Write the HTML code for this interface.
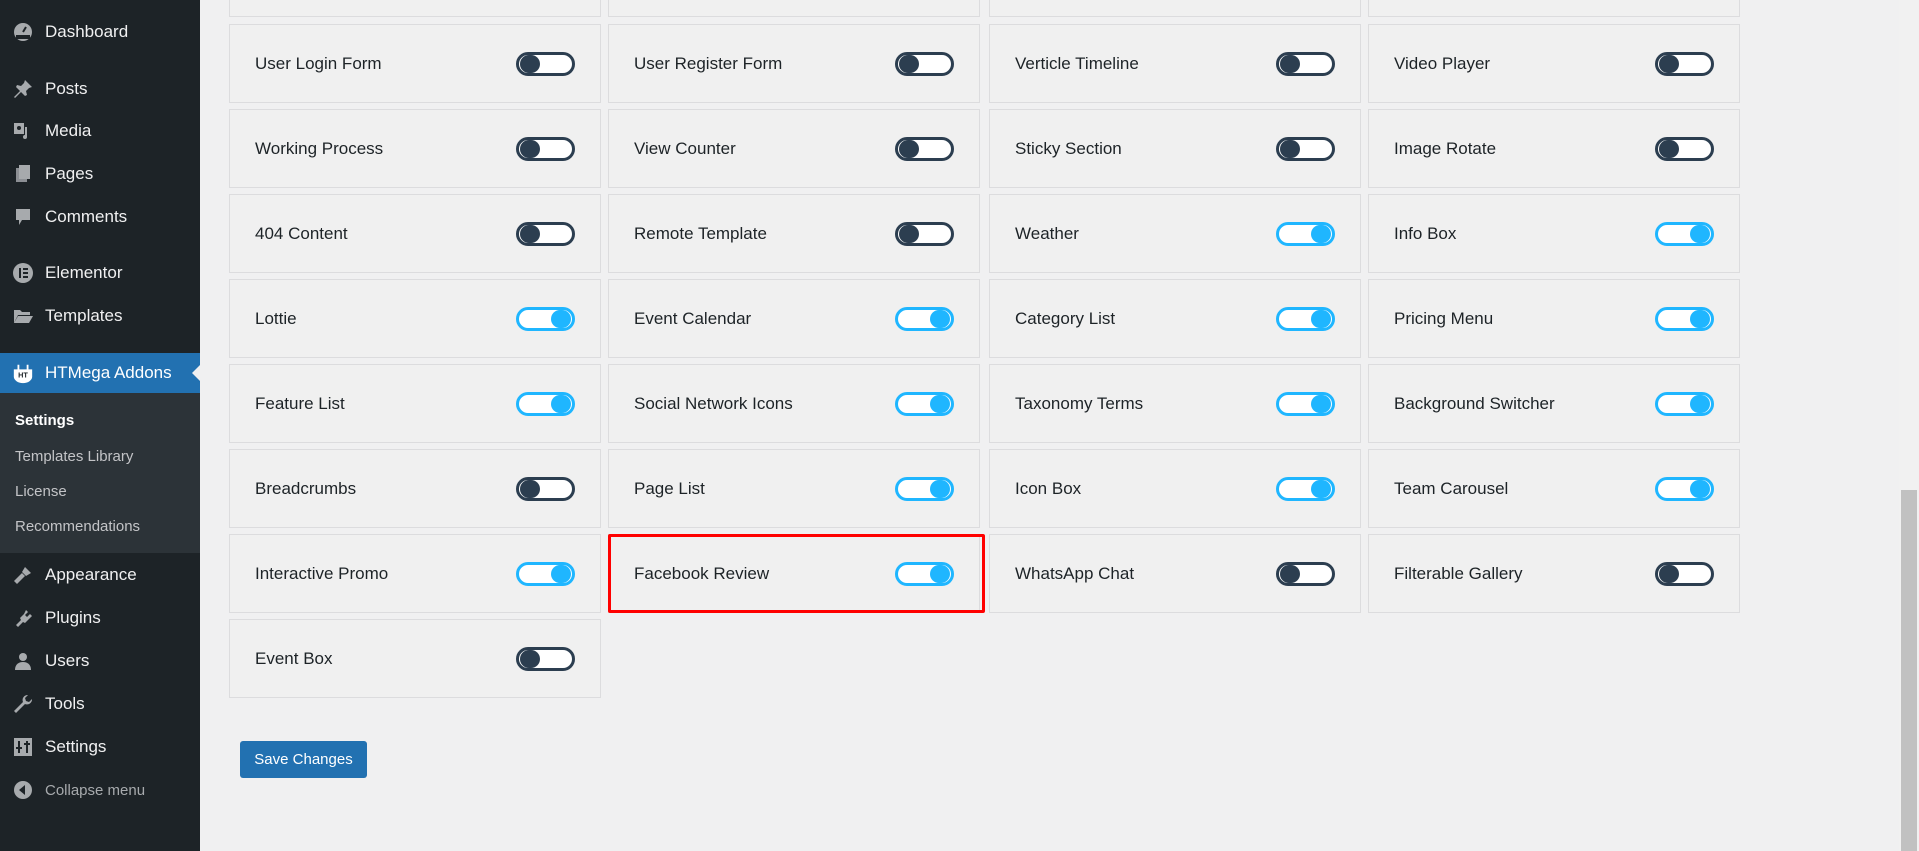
<!DOCTYPE html>
<html><head><meta charset="utf-8"><style>
*{box-sizing:border-box;margin:0;padding:0}
body{width:1919px;height:851px;overflow:hidden;background:#f0f0f1;font-family:"Liberation Sans",sans-serif;position:relative}
#side{position:absolute;left:0;top:0;width:200px;height:851px;background:#1d2327}
.mi{position:absolute;left:0;width:200px;height:36px;display:flex;align-items:center;color:#f0f0f1;font-size:17px}
.mi .ic{position:absolute;left:12px;width:22px;height:22px;display:flex;align-items:center;justify-content:center;color:#a7aaad}
.mi span.t{position:absolute;left:45px}
#sub{position:absolute;left:0;top:393px;width:200px;height:160px;background:#2c3338}
.si{position:absolute;left:15px;font-size:15px;color:#c3c4c7}
.card{position:absolute;width:372px;height:79px;background:#f0f0f0;border:1px solid #dcdcde;display:flex;align-items:center;justify-content:space-between;padding:0 25px 0 25px}
.card .l{font-size:17px;color:#1d2327}
.tg{width:59px;height:24px;border:3px solid #2c3e50;border-radius:12px;background:#fff;position:relative}
.tg::after{content:"";position:absolute;top:0;left:1px;width:20px;height:18px;border-radius:9px;background:#2c3e50}
.tg.on{border-color:#1fb6ff}
.tg.on::after{left:auto;right:1px;background:#1fb6ff}
</style></head><body>
<div id="side">
<div class="mi" style="top:14px"><div class="ic"><svg width="20" height="20" viewBox="0 0 20 20"><circle cx="10" cy="10" r="9" fill="#a7aaad"/><path d="M10 10 L13 5" stroke="#1d2327" stroke-width="2"/><rect x="3" y="13" width="14" height="4" fill="#1d2327"/></svg></div><span class="t">Dashboard</span></div>
<div class="mi" style="top:71px"><div class="ic"><svg width="20" height="20" viewBox="0 0 20 20"><path d="M12 1l7 7-3 1-3 3 1 4-2 1-4-4-6 6-1-1 6-6-4-4 1-2 4 1 3-3z" fill="#a7aaad"/></svg></div><span class="t">Posts</span></div>
<div class="mi" style="top:113px"><div class="ic"><svg width="20" height="20" viewBox="0 0 20 20"><rect x="1" y="2" width="10" height="11" fill="#a7aaad"/><circle cx="6" cy="7" r="2" fill="#1d2327"/><path d="M14 6v10a2 2 0 1 1-2-2V6z" fill="#a7aaad"/></svg></div><span class="t">Media</span></div>
<div class="mi" style="top:156px"><div class="ic"><svg width="20" height="20" viewBox="0 0 20 20"><rect x="3" y="4" width="11" height="14" fill="#8c8f94"/><rect x="6" y="1" width="11" height="14" fill="#a7aaad"/></svg></div><span class="t">Pages</span></div>
<div class="mi" style="top:199px"><div class="ic"><svg width="20" height="20" viewBox="0 0 20 20"><path d="M3 2h14v11H9l-3 5v-5H3z" fill="#a7aaad"/></svg></div><span class="t">Comments</span></div>
<div class="mi" style="top:255px"><div class="ic"><svg width="22" height="22" viewBox="0 0 22 22"><circle cx="11" cy="11" r="10" fill="#a7aaad"/><rect x="7" y="6" width="2" height="10" fill="#1d2327"/><rect x="11" y="6" width="5" height="2" fill="#1d2327"/><rect x="11" y="10" width="5" height="2" fill="#1d2327"/><rect x="11" y="14" width="5" height="2" fill="#1d2327"/></svg></div><span class="t">Elementor</span></div>
<div class="mi" style="top:298px"><div class="ic"><svg width="20" height="20" viewBox="0 0 20 20"><path d="M1 4h6l2 2h8v3H5L1 17z" fill="#a7aaad"/><path d="M5 10h15l-4 7H1z" fill="#a7aaad"/></svg></div><span class="t">Templates</span></div>
<div class="mi" style="top:353px;height:40px;background:#2271b1;color:#fff"><div class="ic"><svg width="24" height="24" viewBox="0 0 24 24"><path d="M2 8h20v8a10 7 0 0 1-20 0z" fill="#fff"/><rect x="6" y="3" width="2" height="6" fill="#fff"/><rect x="16" y="3" width="2" height="6" fill="#fff"/><text x="12" y="17" font-size="8" font-weight="bold" text-anchor="middle" fill="#1d2327" font-family="Liberation Sans">HT</text></svg></div><span class="t">HTMega Addons</span></div>
<div style="position:absolute;left:192px;top:365px;width:0;height:0;border-top:8px solid transparent;border-bottom:8px solid transparent;border-right:8px solid #f0f0f1"></div>
<div id="sub">
<div class="si" style="top:19px;color:#fff;font-weight:bold">Settings</div>
<div class="si" style="top:55px">Templates Library</div>
<div class="si" style="top:90px">License</div>
<div class="si" style="top:125px">Recommendations</div>
</div>
<div class="mi" style="top:557px"><div class="ic"><svg width="20" height="20" viewBox="0 0 20 20"><path d="M12 2l6 6-5 3-4-4z" fill="#a7aaad"/><path d="M9 8l3 3-8 8-3-3z" fill="#a7aaad"/></svg></div><span class="t">Appearance</span></div>
<div class="mi" style="top:600px"><div class="ic"><svg width="20" height="20" viewBox="0 0 20 20"><path d="M13 2l2 2-3 3 2 2 3-3 2 2-3 3-4 4-2-1-5 5-2-2 5-5-1-2 4-4z" fill="#a7aaad"/></svg></div><span class="t">Plugins</span></div>
<div class="mi" style="top:643px"><div class="ic"><svg width="20" height="20" viewBox="0 0 20 20"><circle cx="10" cy="6" r="4" fill="#a7aaad"/><path d="M2 19c0-6 4-8 8-8s8 2 8 8z" fill="#a7aaad"/></svg></div><span class="t">Users</span></div>
<div class="mi" style="top:686px"><div class="ic"><svg width="20" height="20" viewBox="0 0 20 20"><path d="M15 1a5 5 0 0 0-5 7L1 17l2 2 9-9a5 5 0 0 0 7-5l-3 3-3-1-1-3z" fill="#a7aaad"/></svg></div><span class="t">Tools</span></div>
<div class="mi" style="top:729px"><div class="ic"><svg width="20" height="20" viewBox="0 0 20 20"><rect x="1" y="1" width="18" height="18" fill="#a7aaad"/><path d="M6 4v12M14 4v12M3 11h6M11 7h6" stroke="#1d2327" stroke-width="2"/></svg></div><span class="t">Settings</span></div>
<div class="mi" style="top:772px;color:#a7aaad;font-size:15px"><div class="ic"><svg width="20" height="20" viewBox="0 0 20 20"><circle cx="10" cy="10" r="9" fill="#a7aaad"/><path d="M12 5l-6 5 6 5z" fill="#1d2327"/></svg></div><span class="t">Collapse menu</span></div>
</div>

<div class="card" style="left:229px;top:-62px"></div>
<div class="card" style="left:608px;top:-62px"></div>
<div class="card" style="left:989px;top:-62px"></div>
<div class="card" style="left:1368px;top:-62px"></div>

<div class="card" style="left:229px;top:24px"><span class="l">User Login Form</span><div class="tg"></div></div>
<div class="card" style="left:608px;top:24px"><span class="l">User Register Form</span><div class="tg"></div></div>
<div class="card" style="left:989px;top:24px"><span class="l">Verticle Timeline</span><div class="tg"></div></div>
<div class="card" style="left:1368px;top:24px"><span class="l">Video Player</span><div class="tg"></div></div>

<div class="card" style="left:229px;top:109px"><span class="l">Working Process</span><div class="tg"></div></div>
<div class="card" style="left:608px;top:109px"><span class="l">View Counter</span><div class="tg"></div></div>
<div class="card" style="left:989px;top:109px"><span class="l">Sticky Section</span><div class="tg"></div></div>
<div class="card" style="left:1368px;top:109px"><span class="l">Image Rotate</span><div class="tg"></div></div>

<div class="card" style="left:229px;top:194px"><span class="l">404 Content</span><div class="tg"></div></div>
<div class="card" style="left:608px;top:194px"><span class="l">Remote Template</span><div class="tg"></div></div>
<div class="card" style="left:989px;top:194px"><span class="l">Weather</span><div class="tg on"></div></div>
<div class="card" style="left:1368px;top:194px"><span class="l">Info Box</span><div class="tg on"></div></div>

<div class="card" style="left:229px;top:279px"><span class="l">Lottie</span><div class="tg on"></div></div>
<div class="card" style="left:608px;top:279px"><span class="l">Event Calendar</span><div class="tg on"></div></div>
<div class="card" style="left:989px;top:279px"><span class="l">Category List</span><div class="tg on"></div></div>
<div class="card" style="left:1368px;top:279px"><span class="l">Pricing Menu</span><div class="tg on"></div></div>

<div class="card" style="left:229px;top:364px"><span class="l">Feature List</span><div class="tg on"></div></div>
<div class="card" style="left:608px;top:364px"><span class="l">Social Network Icons</span><div class="tg on"></div></div>
<div class="card" style="left:989px;top:364px"><span class="l">Taxonomy Terms</span><div class="tg on"></div></div>
<div class="card" style="left:1368px;top:364px"><span class="l">Background Switcher</span><div class="tg on"></div></div>

<div class="card" style="left:229px;top:449px"><span class="l">Breadcrumbs</span><div class="tg"></div></div>
<div class="card" style="left:608px;top:449px"><span class="l">Page List</span><div class="tg on"></div></div>
<div class="card" style="left:989px;top:449px"><span class="l">Icon Box</span><div class="tg on"></div></div>
<div class="card" style="left:1368px;top:449px"><span class="l">Team Carousel</span><div class="tg on"></div></div>

<div class="card" style="left:229px;top:534px"><span class="l">Interactive Promo</span><div class="tg on"></div></div>
<div class="card" style="left:608px;top:534px"><span class="l">Facebook Review</span><div class="tg on"></div></div>
<div class="card" style="left:989px;top:534px"><span class="l">WhatsApp Chat</span><div class="tg"></div></div>
<div class="card" style="left:1368px;top:534px"><span class="l">Filterable Gallery</span><div class="tg"></div></div>

<div class="card" style="left:229px;top:619px"><span class="l">Event Box</span><div class="tg"></div></div>

<div style="position:absolute;left:608px;top:534px;width:377px;height:79px;border:3px solid #f00;border-radius:2px"></div>

<div style="position:absolute;left:240px;top:741px;width:127px;height:37px;background:#2271b1;border-radius:3px;color:#fff;font-size:15px;display:flex;align-items:center;justify-content:center">Save Changes</div>

<div style="position:absolute;left:1899px;top:0;width:20px;height:851px;background:#f1f1f1"></div>
<div style="position:absolute;left:1901px;top:490px;width:16px;height:361px;background:#c1c1c1"></div>
</body></html>
